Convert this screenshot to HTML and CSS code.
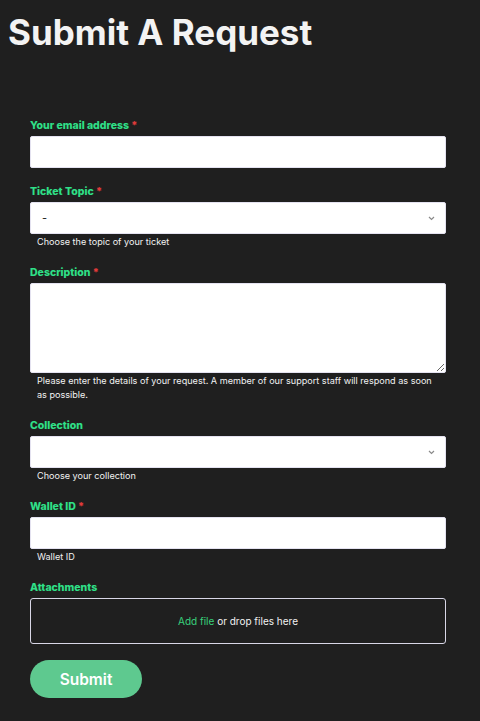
FILE: index.html
```html
<!DOCTYPE html>
<html lang="en">
<head>
<meta charset="utf-8">
<title>Submit A Request</title>
<link rel="stylesheet" href="styles.css">
</head>
<body>
<h1 class="title">Submit A Request</h1>
<form class="request-form">
  <div class="field">
    <label class="label" for="email">Your email address <span class="req">*</span></label>
    <input class="control" id="email" type="email">
  </div>
  <div class="field">
    <label class="label" for="topic">Ticket Topic <span class="req">*</span></label>
    <div class="select">
      <span class="select-value">-</span>
      <svg class="chevron" width="7" height="5" viewBox="0 0 7 5"><path d="M1 1l2.5 2.5L6 1" fill="none" stroke="#8a8a8a" stroke-width="1.2"/></svg>
    </div>
    <p class="hint">Choose the topic of your ticket</p>
  </div>
  <div class="field">
    <label class="label" for="desc">Description <span class="req">*</span></label>
    <textarea class="control area" id="desc"></textarea>
    <p class="hint">Please enter the details of your request. A member of our support staff will respond as soon as possible.</p>
  </div>
  <div class="field">
    <label class="label">Collection</label>
    <div class="select">
      <span class="select-value"></span>
      <svg class="chevron" width="7" height="5" viewBox="0 0 7 5"><path d="M1 1l2.5 2.5L6 1" fill="none" stroke="#8a8a8a" stroke-width="1.2"/></svg>
    </div>
    <p class="hint">Choose your collection</p>
  </div>
  <div class="field">
    <label class="label" for="wallet">Wallet ID <span class="req">*</span></label>
    <input class="control" id="wallet" type="text">
    <p class="hint">Wallet ID</p>
  </div>
  <div class="field">
    <label class="label">Attachments</label>
    <div class="dropzone"><span class="add">Add file</span>&nbsp;or drop files here</div>
  </div>
  <button class="submit" type="button">Submit</button>
</form>
</body>
</html>
```
FILE: styles.css
```css
html, body {
  background: #1f1f1f;
}
body {
  margin: 8px;
  font-family: Inter, "Liberation Sans", sans-serif;
  color: #f2f2f2;
}
.title {
  margin: 3px 0 0;
  font-size: 35px;
  font-weight: 700;
  line-height: normal;
  color: #f3f3f3;
}
.request-form {
  margin: 65px 0 0 22px;
  width: 416px;
}
.field {
  margin-bottom: 16px;
}
.label {
  display: block;
  font-size: 10.5px;
  font-weight: 800;
  line-height: 14px;
  color: #2fe088;
  margin-bottom: 3px;
  padding-top: 1px;
}
.req {
  color: #e23b3b;
}
.control {
  display: block;
  box-sizing: border-box;
  width: 416px;
  height: 32px;
  margin: 0;
  background: #ffffff;
  border: 1px solid #e4e2f0;
  border-radius: 2px;
  font-family: inherit;
  outline: none;
}
.area {
  height: 90px;
  resize: vertical;
}
.select {
  box-sizing: border-box;
  width: 416px;
  height: 32px;
  background: #ffffff;
  border: 1px solid #e4e2f0;
  border-radius: 2px;
  display: flex;
  align-items: center;
  justify-content: space-between;
  padding: 0 10px 0 11px;
}
.select-value {
  font-size: 11px;
  color: #222;
}
.hint {
  margin: 1px 0 0;
  padding: 0 8px 0 7px;
  font-size: 9.1px;
  line-height: 14px;
  color: #f2f2f2;
}
.dropzone {
  box-sizing: border-box;
  height: 46px;
  border: 1px solid #d8d6e6;
  border-radius: 3px;
  display: flex;
  align-items: center;
  justify-content: center;
  font-size: 10px;
  color: #f2f2f2;
}
.add {
  color: #38d27c;
}
.submit {
  display: block;
  width: 112px;
  height: 38px;
  margin: 0;
  border: none;
  border-radius: 19px;
  background: #5ec98f;
  color: #ffffff;
  font-family: inherit;
  font-size: 15.5px;
  font-weight: 600;
  cursor: pointer;
}
```
